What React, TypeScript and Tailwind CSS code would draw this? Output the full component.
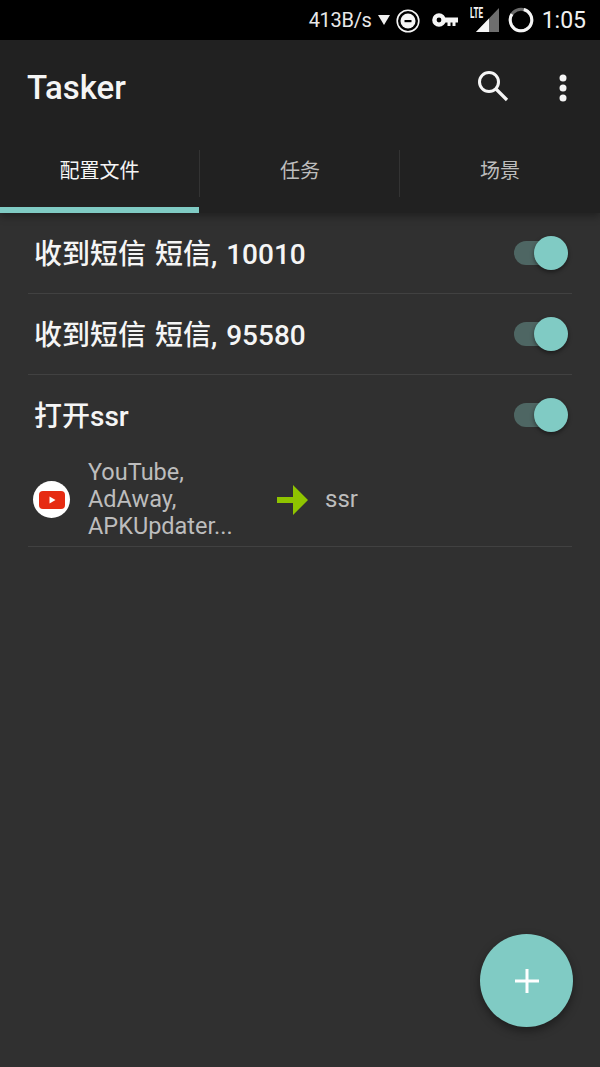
const font = { fontFamily: '"Roboto", "Noto Sans CJK SC", sans-serif' };

function Toggle() {
  return (
    <div className="relative w-[54px] h-[34px] flex items-center">
      <div className="w-[50px] h-[24px] rounded-full bg-[#4e6663]" />
      <div className="absolute right-0 top-0 w-[34px] h-[34px] rounded-full bg-[#80cbc4] shadow-[0_2px_4px_rgba(0,0,0,0.45)]" />
    </div>
  );
}

function Row({ title }: { title: string }) {
  return (
    <div className="h-[80px] flex items-center justify-between pl-[6px] pr-[4px]">
      <span className="mt-[4px] text-[28px] font-medium text-[#f5f5f5] leading-none whitespace-pre [word-spacing:2px]">{title}</span>
      <Toggle />
    </div>
  );
}

function StatusBar() {
  return (
    <div className="h-[40px] bg-black flex items-center justify-end pr-[14px] text-[#e8e8e8]">
      <span className="text-[20px] leading-none tracking-[-0.3px]">413B/s</span>
      <svg width="12" height="10" viewBox="0 0 12 10" className="ml-[6px]"><path d="M0 0h12L6 10z" fill="#f0f0f0" /></svg>
      <svg width="24" height="24" viewBox="0 0 24 24" className="ml-[6px] mt-[2px]">
        <circle cx="12" cy="12" r="10.800" fill="none" stroke="#f5f5f5" strokeWidth="1.600" />
        <circle cx="12" cy="12" r="7.500" fill="#f5f5f5" />
        <rect x="8.500" y="11" width="7" height="2.200" fill="#000" />
      </svg>
      <svg width="26" height="14" viewBox="0 0 26 14" className="ml-[12px] mr-[1px]">
        <circle cx="7" cy="7" r="4.600" fill="none" stroke="#f5f5f5" strokeWidth="4.400" />
        <path d="M12 4.500h14v5h-2.500v3.500h-3V9.500h-2V13h-3V9.500H12z" fill="#f5f5f5" />
      </svg>
      <div className="relative w-[29px] h-[24px] ml-[11px]">
        <svg width="23" height="24" viewBox="0 0 23 24" className="absolute right-0 bottom-0">
          <path d="M23 0v24H0z" fill="#6e6e6e" />
          <path d="M13 10.400V24H0z" fill="#f5f5f5" />
        </svg>
        <span className="absolute left-0 top-0 text-[14px] leading-[11px] font-bold text-[#f5f5f5] scale-x-[0.58] origin-left">LTE</span>
      </div>
      <svg width="26" height="26" viewBox="0 0 26 26" className="ml-[9px]">
        <circle cx="13" cy="13" r="10.800" fill="none" stroke="#6a6a6a" strokeWidth="3" />
        <circle cx="13" cy="13" r="10.800" fill="none" stroke="#f5f5f5" strokeWidth="3" strokeDasharray="54 68" transform="rotate(-75 13 13)" />
      </svg>
      <span className="text-[23px] leading-none ml-[8px] text-[#f0f0f0]">1:05</span>
    </div>
  );
}

function Tab({ label, active, divider }: { label: string; active?: boolean; divider?: boolean }) {
  return (
    <div className="relative flex-1 h-full flex items-start justify-center">
      <span className={`text-[20px] leading-none mt-[28px] ${active ? "text-[#f5f5f5] -ml-[1px]" : "text-[#bdbdbd]"}`}>{label}</span>
      {divider && <div className="absolute right-0 top-[17px] h-[47px] w-px bg-[#333333]" />}
      {active && <div className="absolute left-0 right-[1px] bottom-0 h-[6px] bg-[#80cbc4]" />}
    </div>
  );
}

export default function App() {
  return (
    <div className="relative w-[600px] h-[1067px] bg-[#303030] overflow-hidden flex flex-col" style={font}>
      <StatusBar />
      <div className="bg-[#212121] shadow-[0_3px_8px_rgba(0,0,0,0.35)] z-10">
        <div className="h-[93px] flex items-center pl-[27px] pt-[2px]">
          <span className="text-[33px] font-medium text-[#f5f5f5] leading-none flex-1">Tasker</span>
          <svg width="32" height="32" viewBox="0 0 32 32" className="mr-[50px] -mt-[3px]">
            <circle cx="12" cy="12" r="9.500" fill="none" stroke="#f5f5f5" strokeWidth="3" />
            <path d="M19 19L30 30" stroke="#f5f5f5" strokeWidth="3.200" />
          </svg>
          <svg width="8" height="28" viewBox="0 0 8 28" className="mr-[33px]">
            <circle cx="4" cy="4" r="3.500" fill="#f5f5f5" />
            <circle cx="4" cy="14" r="3.500" fill="#f5f5f5" />
            <circle cx="4" cy="24" r="3.500" fill="#f5f5f5" />
          </svg>
        </div>
        <div className="h-[80px] flex">
          <div className="w-[200px] h-full"><Tab label="配置文件" active divider /></div>
          <div className="w-[200px] h-full"><Tab label="任务" divider /></div>
          <div className="w-[200px] h-full"><Tab label="场景" /></div>
        </div>
      </div>
      <div className="px-[28px] flex flex-col">
        <div className="border-b border-[#414141]"><Row title="收到短信 短信, 10010" /></div>
        <div className="border-b border-[#414141]"><Row title="收到短信 短信, 95580" /></div>
        <Row title="打开ssr" />
        <div className="h-[92px] border-b border-[#414141] flex items-center">
          <div className="ml-[5px] -mt-[2px] w-[37px] h-[37px] rounded-full bg-white flex items-center justify-center shrink-0">
            <svg width="26" height="18" viewBox="0 0 26 18">
              <rect x="0" y="0" width="26" height="18" rx="4" fill="#e62b12" />
              <path d="M10.500 5.500v7l6-3.500z" fill="#fff" />
            </svg>
          </div>
          <div className="ml-[18px] -mt-[2px] w-[189px] text-[23.5px] leading-[27px] text-[#bdbdbd]">
            <div>YouTube,</div>
            <div>AdAway,</div>
            <div>APKUpdater...</div>
          </div>
          <svg width="31" height="30" viewBox="0 0 31 30" className="shrink-0 -mt-[2px]">
            <path d="M0 12h16V0l15 15-15 15V18H0z" fill="#8fc400" />
          </svg>
          <span className="ml-[17px] -mt-[3px] text-[24px] text-[#bdbdbd] leading-none">ssr</span>
        </div>
      </div>
      <div className="absolute left-[480px] top-[934px] w-[93px] h-[93px] rounded-full bg-[#80cbc4] shadow-[0_4px_10px_rgba(0,0,0,0.4)] flex items-center justify-center">
        <svg width="24" height="24" viewBox="0 0 24 24">
          <path d="M10.500 0h3v10.500H24v3H13.500V24h-3V13.500H0v-3h10.500z" fill="#fff" />
        </svg>
      </div>
    </div>
  );
}
